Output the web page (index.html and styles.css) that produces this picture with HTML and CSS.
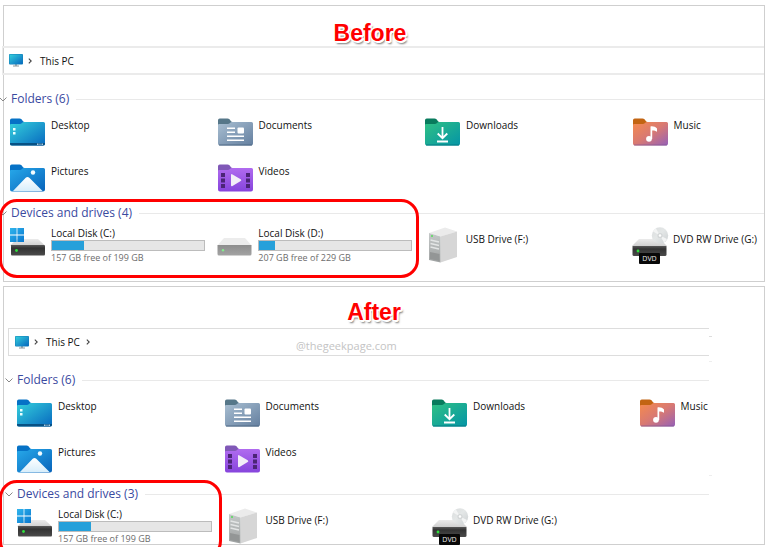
FILE: index.html
```html
<!DOCTYPE html>
<html lang="en">
<head>
<meta charset="utf-8">
<meta name="viewport" content="width=device-width, initial-scale=1">
<title>This PC: before and after</title>
<link rel="stylesheet" href="styles.css">
</head>
<body>
<svg class="sprite" aria-hidden="true">
  <defs>
    <linearGradient id="g-desktop" x1="0" y1="0" x2="1" y2="1"><stop offset="0" stop-color="#35d0dc"/><stop offset="1" stop-color="#0768bf"/></linearGradient>
    <linearGradient id="g-docs" x1="0" y1="0" x2="1" y2="1"><stop offset="0" stop-color="#a9bfd2"/><stop offset="1" stop-color="#647f9f"/></linearGradient>
    <linearGradient id="g-down" x1="0" y1="0" x2="1" y2="1"><stop offset="0" stop-color="#30c184"/><stop offset="1" stop-color="#0494a6"/></linearGradient>
    <linearGradient id="g-music" x1="0" y1="0" x2="1" y2="1"><stop offset="0" stop-color="#f68b4c"/><stop offset=".5" stop-color="#d87973"/><stop offset="1" stop-color="#9560b8"/></linearGradient>
    <linearGradient id="g-pics" x1="0" y1="0" x2="1" y2="1"><stop offset="0" stop-color="#27a9ea"/><stop offset="1" stop-color="#0863ba"/></linearGradient>
    <linearGradient id="g-video" x1="0" y1="0" x2="0" y2="1"><stop offset="0" stop-color="#b06bef"/><stop offset="1" stop-color="#8644dc"/></linearGradient>
    <linearGradient id="g-snow" x1="0" y1="0" x2="0" y2="1"><stop offset="0" stop-color="#fff"/><stop offset="1" stop-color="#d8eefb"/></linearGradient>
    <linearGradient id="g-win" x1="0" y1="0" x2="1" y2="1"><stop offset="0" stop-color="#31b5ed"/><stop offset="1" stop-color="#0877cf"/></linearGradient>
    <linearGradient id="g-lid" x1="0" y1="0" x2="0" y2="1"><stop offset="0" stop-color="#ebebeb"/><stop offset="1" stop-color="#d0d0d0"/></linearGradient>
    <linearGradient id="g-dark" x1="0" y1="0" x2="0" y2="1"><stop offset="0" stop-color="#585858"/><stop offset=".3" stop-color="#333"/><stop offset="1" stop-color="#4b4b4b"/></linearGradient>
    <linearGradient id="g-gray" x1="0" y1="0" x2="0" y2="1"><stop offset="0" stop-color="#8d8d8d"/><stop offset="1" stop-color="#a3a3a3"/></linearGradient>
    <linearGradient id="g-front" x1="0" y1="0" x2="0" y2="1"><stop offset="0" stop-color="#c4c8c8"/><stop offset="1" stop-color="#a0a3a3"/></linearGradient>
    <linearGradient id="g-disc" x1="0" y1="0" x2="1" y2="1"><stop offset="0" stop-color="#d9dcdd"/><stop offset=".45" stop-color="#e4e7e7"/><stop offset="1" stop-color="#ccd0d2"/></linearGradient>
  </defs>
  <symbol id="tab" viewBox="0 0 35 28"><path d="M0 10V2.200Q0 .5 1.700.5H9.500Q10.700.5 11.500 1.300L13 3.200Q13.500 4 14.500 4V5.500H12.500L11 7.500H1Z"/></symbol>
  <symbol id="body" viewBox="0 0 35 28"><path d="M0 7Q0 6 1 6H10Q11 6 11.700 5.300L12.500 4.500Q13 4 14 4H33.500Q35 4 35 5.500V25.500Q35 27.500 33 27.500H2Q0 27.500 0 25.500Z"/></symbol>

  <symbol id="desktop" viewBox="0 0 35 28">
    <use href="#tab" width="35" height="28" fill="#0672c6"/><use href="#body" width="35" height="28" fill="url(#g-desktop)"/>
    <path d="M0 25H35V26Q35 27.500 33 27.500H2Q0 27.500 0 26Z" fill="#075184"/>
    <path d="M3 10h2.500v2.500H3zM3 14h2.500v2.500H3z" fill="#eaffff"/>
    <path d="M27 25.500h1.500v1.500H27zM29.500 25.500h1v1.500h-1zM31.500 25.500h1.500v1.500h-1.500z" fill="#aacce3"/>
  </symbol>
  <symbol id="documents" viewBox="0 0 35 28">
    <use href="#tab" width="35" height="28" fill="#567789"/><use href="#body" width="35" height="28" fill="url(#g-docs)"/>
    <path d="M1 27H34" stroke="#4e6884"/>
    <path d="M9 9.500h8v1.500H9zM9 13.500h8V15H9zM9 17.500h17V19H9zM9 21.500h17V23H9z" fill="#fff"/><rect x="19.500" y="9.500" width="6.500" height="6" rx="1" fill="#fff"/>
  </symbol>
  <symbol id="downloads" viewBox="0 0 35 28">
    <use href="#tab" width="35" height="28" fill="#087b5d"/><use href="#body" width="35" height="28" fill="url(#g-down)"/>
    <path d="M1 27H34" stroke="#047a83"/>
    <path d="M17.500 9V20M12.700 15.500L17.500 20.200L22.300 15.500M12 23.500H23" fill="none" stroke="#fff" stroke-width="1.800"/>
  </symbol>
  <symbol id="music" viewBox="0 0 35 28">
    <use href="#tab" width="35" height="28" fill="#c26412"/><use href="#body" width="35" height="28" fill="url(#g-music)"/>
    <path d="M1 27H34" stroke="#80558f" stroke-opacity=".7"/>
    <circle cx="16" cy="20.800" r="2.900" fill="#fff"/><path d="M17.500 21V8.500C20 8 22.500 9 24 10.500V13.700C22 12.500 20.500 12.200 19.200 12.500V21Z" fill="#fff"/>
  </symbol>
  <symbol id="pictures" viewBox="0 0 35 28">
    <use href="#tab" width="35" height="28" fill="#0672c6"/><use href="#body" width="35" height="28" fill="url(#g-pics)"/>
    <path d="M3 27L15.700 13.800Q17.500 12 19.300 13.800L32.500 27Z" fill="url(#g-snow)"/><circle cx="23" cy="8.500" r="2.200" fill="#f4fcff"/>
  </symbol>
  <symbol id="videos" viewBox="0 0 35 28">
    <use href="#tab" width="35" height="28" fill="#8058b7"/><use href="#body" width="35" height="28" fill="url(#g-video)"/>
    <path d="M3 9h4v4H3zM3 14.500h4v4H3zM3 20h4v4H3zM28 9h4v4h-4zM28 14.500h4v4h-4zM28 20h4v4h-4z" fill="#4b2477"/>
    <path d="M13 11.200Q13 9.500 14.500 10.400L22.700 15.300Q24 16.200 22.700 17.100L14.500 22Q13 22.700 13 21Z" fill="#f3eef8"/>
  </symbol>
  <symbol id="disk-c" viewBox="0 0 35 28">
    <path d="M7 11H28L35 17.500H0Z" fill="url(#g-lid)"/><path d="M1 17H34Q35 17 35 18V26Q35 27.500 34 27.500H2Q1 27.500 1 26Z" fill="url(#g-dark)"/>
    <circle cx="6.500" cy="22.500" r="1.400" fill="#2fe13c"/>
    <path d="M0 0H6.600V6.600H0zM7.400 0H14V6.600H7.400zM0 7.400H6.600V14H0zM7.400 7.400H14V14H7.400z" fill="url(#g-win)"/>
  </symbol>
  <symbol id="disk-d" viewBox="0 0 35 28">
    <path d="M7 10H28L34.500 17.500H.5Z" fill="#ececec"/><path d="M.5 17H34.500V26Q34.500 27.500 33 27.500H2Q.5 27.500 .5 26Z" fill="url(#g-gray)"/>
    <circle cx="6" cy="22.300" r="1.200" fill="#84ee8d"/>
  </symbol>
  <symbol id="usb" viewBox="-4 0 35 36">
    <path d="M0 6L16 .5L28 4.500L12 9.500Z" fill="#ebebeb"/><path d="M11.500 9.500L28 4.500V30L11.500 35.500Z" fill="#d6d6d6"/><path d="M0 6L11.500 9.500V35.500L0 33Z" fill="url(#g-front)"/>
    <path d="M1.500 13L10 15M1.500 16.500L10 18.500M1.500 20L10 22" stroke="#e3e5e5" stroke-width="1.500"/><path d="M1 25L10.500 27V34L1 32Z" fill="#939696"/>
    <circle cx="3" cy="9" r="1" fill="#55dc58"/>
  </symbol>
  <symbol id="dvd" viewBox="0 0 37 37">
    <path d="M7 12H28L35 19H0Z" fill="url(#g-lid)"/>
    <circle cx="28" cy="8.500" r="8.200" fill="url(#g-disc)"/><path d="M28 8.500L21 4.500A8 8 0 0 1 24 1.500zM28 8.500L35 12A8 8 0 0 1 32 15.500z" fill="#f3f4f4"/><circle cx="28" cy="8.500" r="2.600" fill="#d3d6d7"/><circle cx="28" cy="8.500" r="1.300" fill="#fff"/>
    <path d="M.5 19H34.500V27.500Q34.500 29 33 29H2Q.5 29 .5 27.500Z" fill="url(#g-dark)"/><circle cx="6" cy="24" r="1.400" fill="#2fe13c"/>
  </symbol>
  <symbol id="pc" viewBox="0 0 14 13">
    <path d="M6 10H8V12H6z" fill="#a6b0b6"/><path d="M4 12H10" stroke="#8c969b"/><rect width="14" height="10.500" rx="1" fill="#1480b8"/><rect x=".5" y=".5" width="13" height="9.500" rx=".5" fill="url(#g-desktop)"/>
  </symbol>
  <symbol id="next" viewBox="0 0 4 6"><path d="M.8.6L3.200 3L.8 5.400" fill="none" stroke="#444" stroke-width="1.100"/></symbol>
  <symbol id="open" viewBox="0 0 8 5"><path d="M.5.5L4 4L7.500.5" fill="none" stroke="#888"/></symbol>
</svg>

<main>
  <section class="panel before" aria-labelledby="before-title">
    <h1 id="before-title">Before</h1>
    <nav class="address" aria-label="Location">
      <svg class="pc"><use href="#pc"/></svg><svg class="next"><use href="#next"/></svg>
      <button type="button">This PC</button>
    </nav>
    <section class="group">
      <h2><button type="button" aria-expanded="true"><svg class="open"><use href="#open"/></svg>Folders (6)</button></h2>
      <ul class="items">
        <li><a href="#"><svg><use href="#desktop"/></svg>Desktop</a></li>
        <li><a href="#"><svg><use href="#documents"/></svg>Documents</a></li>
        <li><a href="#"><svg><use href="#downloads"/></svg>Downloads</a></li>
        <li><a href="#"><svg><use href="#music"/></svg>Music</a></li>
        <li><a href="#"><svg><use href="#pictures"/></svg>Pictures</a></li>
        <li><a href="#"><svg><use href="#videos"/></svg>Videos</a></li>
      </ul>
    </section>
    <section class="group devices">
      <h2><button type="button" aria-expanded="true"><svg class="open"><use href="#open"/></svg>Devices and drives (4)</button></h2>
      <ul class="items drives">
        <li><a href="#"><svg><use href="#disk-c"/></svg><span class="disk">Local Disk (C:)<span class="bar"><span style="width:21%"></span></span><small>157 GB free of 199 GB</small></span></a></li>
        <li><a href="#"><svg><use href="#disk-d"/></svg><span class="disk">Local Disk (D:)<span class="bar"><span style="width:10%"></span></span><small>207 GB free of 229 GB</small></span></a></li>
        <li class="removable"><a href="#"><svg><use href="#usb"/></svg>USB Drive (F:)</a></li>
        <li class="removable"><a href="#"><svg class="dvd"><use href="#dvd"/></svg><span class="badge">DVD</span>DVD RW Drive (G:)</a></li>
      </ul>
      <div class="marker"></div>
    </section>
  </section>

  <section class="panel after" aria-labelledby="after-title">
    <h1 id="after-title">After</h1>
    <nav class="address" aria-label="Location">
      <svg class="pc"><use href="#pc"/></svg><svg class="next"><use href="#next"/></svg>
      <button type="button">This PC</button><svg class="next"><use href="#next"/></svg>
      <span class="watermark">@thegeekpage.com</span>
    </nav>
    <section class="group">
      <h2><button type="button" aria-expanded="true"><svg class="open"><use href="#open"/></svg>Folders (6)</button></h2>
      <ul class="items">
        <li><a href="#"><svg><use href="#desktop"/></svg>Desktop</a></li>
        <li><a href="#"><svg><use href="#documents"/></svg>Documents</a></li>
        <li><a href="#"><svg><use href="#downloads"/></svg>Downloads</a></li>
        <li><a href="#"><svg><use href="#music"/></svg>Music</a></li>
        <li><a href="#"><svg><use href="#pictures"/></svg>Pictures</a></li>
        <li><a href="#"><svg><use href="#videos"/></svg>Videos</a></li>
      </ul>
    </section>
    <section class="group devices">
      <h2><button type="button" aria-expanded="true"><svg class="open"><use href="#open"/></svg>Devices and drives (3)</button></h2>
      <ul class="items drives">
        <li><a href="#"><svg><use href="#disk-c"/></svg><span class="disk">Local Disk (C:)<span class="bar"><span style="width:21%"></span></span><small>157 GB free of 199 GB</small></span></a></li>
        <li class="removable"><a href="#"><svg><use href="#usb"/></svg>USB Drive (F:)</a></li>
        <li class="removable"><a href="#"><svg class="dvd"><use href="#dvd"/></svg><span class="badge">DVD</span>DVD RW Drive (G:)</a></li>
      </ul>
      <div class="marker"></div>
    </section>
  </section>
</main>
</body>
</html>
```
FILE: styles.css
```css
* { box-sizing: border-box; }

body {
  margin: 0;
  overflow: hidden;
  background: #fff;
  color: #111;
  font: 10px/14px "Open Sans", "Noto Sans", sans-serif;
}

.sprite { position: absolute; width: 0; height: 0; }
main { padding: 5px 3px 3px; }
h1, h2, ul { margin: 0; padding: 0; }
button { padding: 0; border: 0; background: none; color: inherit; font: inherit; }
a { color: inherit; text-decoration: none; }
svg { display: block; flex: none; }

.panel { border: 1px solid #cfcfcf; }
.after {
  height: 259px;
  margin-top: 4px;
  background:
    linear-gradient(#ddd, #ddd) 705px 49px / 3px 1px no-repeat,
    linear-gradient(#eee, #eee) 705px 74px / 3px 1px no-repeat,
    linear-gradient(#eee, #eee) 705px 188px / 3px 1px no-repeat;
}

h1 {
  height: 40px;
  padding: 8px 28px 0 0;
  color: #f00;
  font: bold 23px/38px "Liberation Sans", Arial, sans-serif;
  text-align: center;
  text-shadow: -1px -1px #fff, 1px -1px #fff, -1px 1px #fff, 2px 1px #fff, 1px 2px #fff, 2px 3px 2px #777;
}
.after h1 { padding: 6px 20px 0 0; }

.address {
  position: relative;
  display: flex;
  align-items: center;
  height: 29px;
  margin-left: -2px;
  padding-left: 6px;
  border: solid #ebebeb;
  border-width: 2px 0 2px 1px;
}
.address button { margin: 0 6px 0 8px; }
.pc { width: 14px; height: 13px; margin-right: 5px; }
.next { width: 4px; height: 6px; }

.after .address {
  height: 28px;
  margin: 1px 55px 0 4px;
  border-width: 1px 0 1px 1px;
  border-color: #ddd;
}
.watermark {
  position: absolute;
  top: 10px;
  left: 41%;
  color: #c4c4c4;
  font-size: 11px;
}

.group { position: relative; margin-top: 16px; }
.group h2 {
  display: flex;
  align-items: center;
  gap: 7px;
  margin-left: -5px;
  color: #3a4a9f;
  font-size: 12px;
  font-weight: 400;
  line-height: 16px;
}
.group h2::after { content: ""; flex: 1; height: 1px; background: #e9e9e9; }
.group h2 button { display: flex; align-items: center; gap: 4px; }
.open { width: 8px; height: 5px; }
.after .group h2 { margin: 0 55px 0 1px; }

.items {
  display: grid;
  grid-template-columns: 5fr 5fr 5fr 3fr;
  row-gap: 18px;
  padding: 11px 7px 0 6px;
  list-style: none;
}
.after .items { padding: 11px 0 0 13px; }
.items a { position: relative; display: flex; gap: 6px; white-space: nowrap; }
.items svg { width: 35px; height: 28px; }
.items .removable svg { height: 36px; }
.items svg.dvd { width: 37px; height: 37px; margin-right: -2px; }

.devices { margin-top: 13px; }
.before .drives, .after .drives { padding-top: 5px; }
.removable a { line-height: 26px; }
.drives svg { margin-top: 2px; }
.removable svg { margin-top: 1px; }
.disk { width: 154px; }
.bar {
  display: block;
  height: 11px;
  border: 1px solid #bcbcbc;
  background: #e6e6e6;
}
.bar span { display: block; height: 100%; background: #26a0da; }
.disk small { display: block; color: #6c6c6c; font-size: 9px; line-height: 14px; }

.badge {
  position: absolute;
  top: 27px;
  left: 7px;
  width: 21px;
  height: 11px;
  border-radius: 1px;
  background: #080808;
  color: #eee;
  font-size: 7px;
  line-height: 11px;
  text-align: center;
}

.marker {
  position: absolute;
  top: -6px;
  left: -5px;
  width: 420px;
  height: 79px;
  border: 3px solid #f00;
  border-radius: 18px;
  pointer-events: none;
}
.after .marker { width: 223px; }
.before .devices { padding-bottom: 16px; }
```
